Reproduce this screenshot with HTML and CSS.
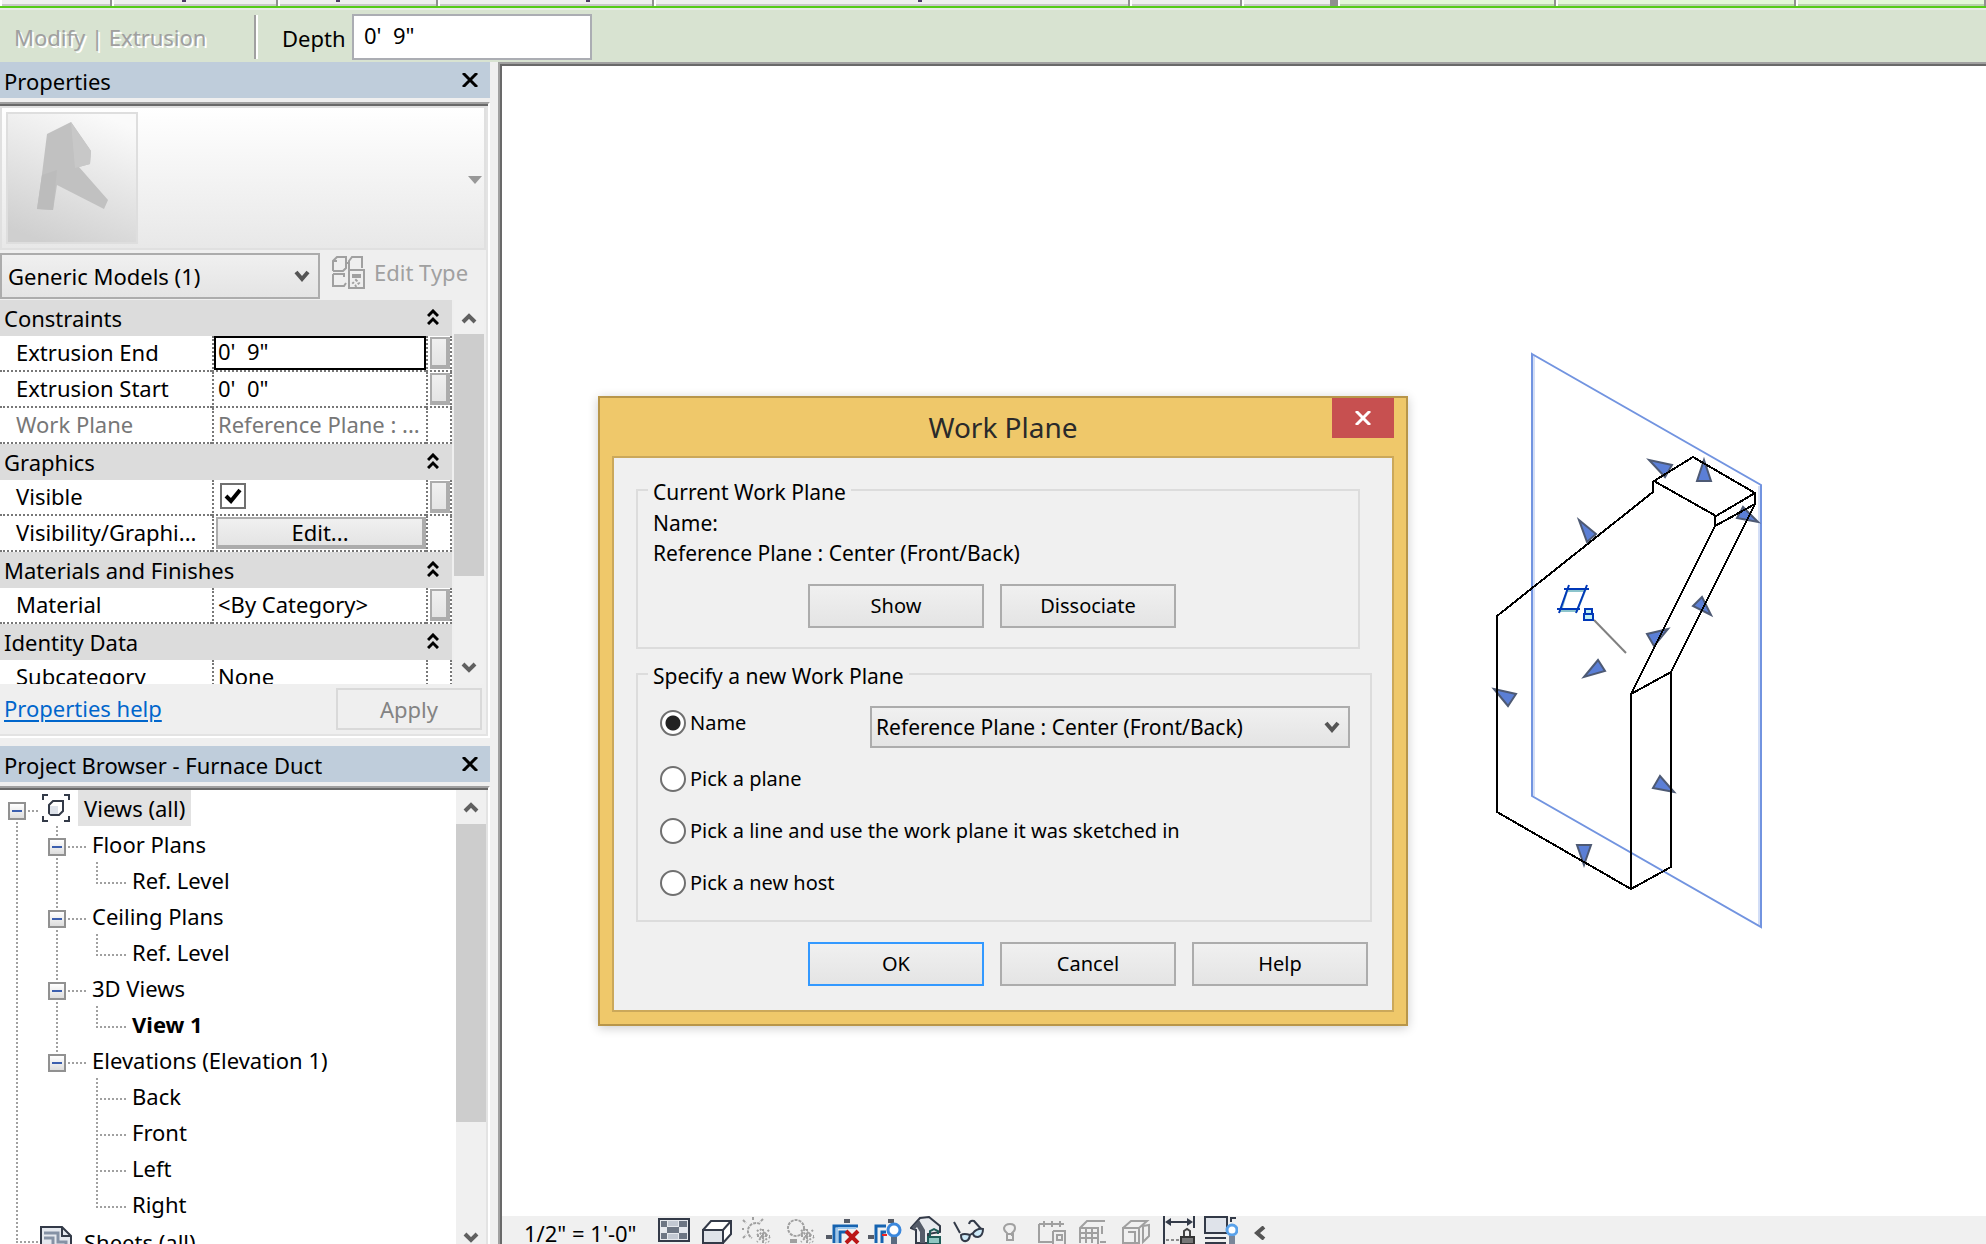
FILE: index.html
```html
<!DOCTYPE html>
<html lang="en">
<head>
<meta charset="utf-8">
<title>Furnace Duct - Modify Extrusion</title>
<link rel="stylesheet" href="styles.css">
</head>
<body>
<div class="app">
  <div class="ribbon" aria-hidden="true">
    <i class="tab w110"></i><i class="tab w168"><b></b></i><i class="tab w160"><b></b></i><i class="tab w216"><b></b></i><i class="tab w476"><b></b></i><i class="tab w112"></i><i class="tab w88"></i>
    <i class="tab context first"></i><i class="tab context w240"></i><i class="tab context grow"></i>
  </div>
  <form class="options">
    <span class="mode">Modify | Extrusion</span>
    <label class="depth" for="depth">Depth</label>
    <input class="depth-input" id="depth" type="text" value="0'  9&quot;">
  </form>
  <div class="workspace">
    <aside class="side">
      <section class="panel">
        <header class="title"><h2>Properties</h2><button class="close" type="button" aria-label="Close Properties"><svg width="16" height="14" viewBox="0 0 16 14"><path d="M1 0L15 14M15 0L1 14" stroke="#000" stroke-width="3"/></svg></button></header>
        <div class="frame">
          <button class="type" type="button" aria-label="Type selector">
            <svg class="thumb" width="132" height="132" viewBox="0 0 132 132">
              <defs><linearGradient id="tg" x1="0.7" y1="0" x2="0.3" y2="1"><stop offset="0" stop-color="#fafafa"/><stop offset="1" stop-color="#cfcfcf"/></linearGradient></defs>
              <rect x="1" y="1" width="130" height="130" fill="url(#tg)" stroke="#dedede" stroke-width="2"/>
              <path d="M41 22L65 10L85 39L84 52L73 55L102 88L98 97L51 73L47 98L31 97L36 62Z" fill="#c1c1c1"/>
              <path d="M65 10L85 39L84 52L69 56Z" fill="#c8c8c8"/><path d="M36 63L51 58L47 98L31 97Z" fill="#bcbcbc"/>
            </svg>
            <svg class="drop" width="14" height="8" viewBox="0 0 14 8"><path d="M0 0H14L7 8Z" fill="#989898"/></svg>
          </button>
          <div class="filter">
            <select class="combo" aria-label="Selection filter"><option>Generic Models (1)</option></select>
            <button class="edit-type" type="button" disabled>
              <svg width="34" height="34" viewBox="0 0 34 34" fill="none" stroke="#a0a0a0" stroke-width="2"><path d="M1 15V5L5 1H14V12L11 15H1M17 13V5L20 1H30V12M1 18H12V21M1 18V30H12L14 27M17 14H32V32H17ZM14 7H18M5 5H2"/><path d="M20 18H29V22H20Z" fill="#a0a0a0" stroke="none"/><path d="M24 24L27 27L24 30L21 27Z" stroke-dasharray="2"/></svg>
              Edit Type</button>
          </div>
          <div class="props">
            <table>
              <colgroup><col class="c1"><col><col class="c3"></colgroup>
              <tbody>
                <tr class="group"><th colspan="3">Constraints<svg class="fold" width="12" height="16" viewBox="0 0 12 16"><path d="M1 7L6 2L11 7M1 15L6 10L11 15"/></svg></th></tr>
                <tr><th><label for="ext-end">Extrusion End</label></th><td class="active"><input id="ext-end" type="text" value="0'  9&quot;"></td><td><button class="mini" type="button" aria-label="Associate Extrusion End"></button></td></tr>
                <tr><th>Extrusion Start</th><td>0'&nbsp; 0"</td><td><button class="mini" type="button" aria-label="Associate Extrusion Start"></button></td></tr>
                <tr class="dim"><th>Work Plane</th><td>Reference Plane : ...</td><td></td></tr>
                <tr class="group"><th colspan="3">Graphics<svg class="fold" width="12" height="16" viewBox="0 0 12 16"><path d="M1 7L6 2L11 7M1 15L6 10L11 15"/></svg></th></tr>
                <tr><th><label for="vis">Visible</label></th><td><input class="check" id="vis" type="checkbox" checked></td><td><button class="mini" type="button" aria-label="Associate Visible"></button></td></tr>
                <tr><th>Visibility/Graphi...</th><td class="btn-cell"><button class="edit" type="button">Edit...</button></td><td></td></tr>
                <tr class="group"><th colspan="3">Materials and Finishes<svg class="fold" width="12" height="16" viewBox="0 0 12 16"><path d="M1 7L6 2L11 7M1 15L6 10L11 15"/></svg></th></tr>
                <tr><th>Material</th><td>&lt;By Category&gt;</td><td><button class="mini" type="button" aria-label="Associate Material"></button></td></tr>
                <tr class="group"><th colspan="3">Identity Data<svg class="fold" width="12" height="16" viewBox="0 0 12 16"><path d="M1 7L6 2L11 7M1 15L6 10L11 15"/></svg></th></tr>
                <tr><th>Subcategory</th><td>None</td><td></td></tr>
              </tbody>
            </table>
            <div class="scroll" aria-hidden="true">
              <svg width="30" height="34" viewBox="0 0 30 34"><path class="chev" d="M9 22L15 16L21 22"/></svg>
              <i class="thumb-bar upper"></i>
              <svg class="down" width="30" height="34" viewBox="0 0 30 34"><path class="chev" d="M9 14L15 20L21 14"/></svg>
            </div>
          </div>
          <footer class="foot"><a href="#help">Properties help</a><button class="apply" type="button" disabled>Apply</button></footer>
        </div>
      </section>
      <section class="panel browser">
        <header class="title"><h2>Project Browser - Furnace Duct</h2><button class="close" type="button" aria-label="Close Project Browser"><svg width="16" height="14" viewBox="0 0 16 14"><path d="M1 0L15 14M15 0L1 14" stroke="#000" stroke-width="3"/></svg></button></header>
        <div class="frame tree-frame">
          <ul class="tree">
            <li class="l1"><div class="row"><i class="box"></i><i class="dots"></i>
              <svg class="node" width="28" height="28" viewBox="0 0 28 28" fill="none" stroke="#333a48" stroke-width="2"><path d="M1 6V1H6M22 1H27V6M27 22V27H22M6 27H1V22"/><path d="M7 11L11 7H21V17L17 21H9L7 19Z" fill="#fff"/><path d="M8 12H16V20H8Z" fill="#dde2ea" stroke="none"/></svg>
              <span class="picked">Views (all)</span></div>
              <ul>
                <li class="l2"><div class="row"><i class="box"></i><i class="dots"></i><span>Floor Plans</span></div>
                  <ul><li class="l3">Ref. Level</li></ul></li>
                <li class="l2"><div class="row"><i class="box"></i><i class="dots"></i><span>Ceiling Plans</span></div>
                  <ul><li class="l3">Ref. Level</li></ul></li>
                <li class="l2"><div class="row"><i class="box"></i><i class="dots"></i><span>3D Views</span></div>
                  <ul><li class="l3 open-view">View 1</li></ul></li>
                <li class="l2"><div class="row"><i class="box"></i><i class="dots"></i><span>Elevations (Elevation 1)</span></div>
                  <ul><li class="l3">Back</li><li class="l3">Front</li><li class="l3">Left</li><li class="l3">Right</li></ul></li>
              </ul>
            </li>
            <li class="l1 sheets"><div class="row"><i class="dots"></i>
              <svg class="node" width="32" height="32" viewBox="0 0 32 32" fill="none" stroke="#333a48" stroke-width="2"><path d="M1 1H22L31 10V31H1Z" fill="#e4e8ee"/><path d="M22 1V10H31"/><path d="M4 7H18V16H26V30M4 12H13V20H4M18 20V30" stroke="#8592a5" stroke-width="3"/></svg>
              <span>Sheets (all)</span></div></li>
          </ul>
          <div class="scroll" aria-hidden="true">
            <svg width="30" height="34" viewBox="0 0 30 34"><path class="chev" d="M9 21L15 15L21 21"/></svg>
            <i class="thumb-bar lower"></i>
            <svg class="down" width="30" height="20" viewBox="0 0 30 20"><path class="chev" d="M9 10L15 16L21 10"/></svg>
          </div>
        </div>
      </section>
    </aside>
    <main class="canvas">
      <svg class="model" width="280" height="590" viewBox="1490 346 280 590" fill="none">
        <g stroke="#d3def6" stroke-width="2"><path d="M1534 356V796M1759 486V925"/></g>
        <path d="M1532 354L1761 485V927L1532 796Z" stroke="#7294e0" stroke-width="2"/>
        <g fill="#5b7fd6" stroke="#4e5a74" stroke-width="2">
          <path d="M1649 460L1672 465L1665 477Z"/><path d="M1704 460L1711 481H1697Z"/><path d="M1579 520L1596 534L1587 542Z"/><path d="M1758 522L1743 507L1737 518Z"/><path d="M1711 615L1702 597L1693 606Z"/><path d="M1668 629L1647 634L1654 646Z"/><path d="M1584 677L1598 660L1605 671Z"/><path d="M1494 689L1516 694L1508 706Z"/><path d="M1674 792L1660 776L1653 788Z"/><path d="M1584 865L1577 845H1591Z"/>
        </g>
        <path d="M1654 481L1693 457L1755 493L1716 516ZM1653 481V492L1497 616V812L1631 889V694L1715 526V516M1715 526L1755 504V493M1755 504L1671 672V867L1631 889M1631 694L1671 672" stroke="#000" stroke-width="2" shape-rendering="crispEdges"/>
        <path d="M1594 620L1626 653" stroke="#808080" stroke-width="2"/>
        <path d="M1567 591H1585L1577 611H1561Z" stroke="#8cc4cc" stroke-width="2"/>
        <path d="M1564 589H1589M1557 609H1580M1569 585L1559 613M1587 585L1576 613" stroke="#0038b8" stroke-width="2"/>
        <path d="M1584 614H1593V620H1584ZM1585 613V609H1592V613" fill="#bff0f4" stroke="#0038b8" stroke-width="2"/>
      </svg>

      <form class="dialog" role="dialog" aria-labelledby="dlg-title">
        <header class="dlg-head"><h1 id="dlg-title">Work Plane</h1>
          <button class="dlg-close" type="button" aria-label="Close"><svg width="16" height="14" viewBox="0 0 16 14"><path d="M1 0L15 14M15 0L1 14" stroke="#fff" stroke-width="3"/></svg></button></header>
        <div class="dlg-body">
          <fieldset class="current">
            <legend>Current Work Plane</legend>
            <p>Name:</p>
            <p>Reference Plane : Center (Front/Back)</p>
            <div class="pair"><button class="push" type="button">Show</button><button class="push" type="button">Dissociate</button></div>
          </fieldset>
          <fieldset class="specify">
            <legend>Specify a new Work Plane</legend>
            <div class="by-name"><label class="pick"><input type="radio" name="plane" checked>Name</label>
              <select class="combo plane" aria-label="Work plane name"><option>Reference Plane : Center (Front/Back)</option></select></div>
            <label class="pick"><input type="radio" name="plane">Pick a plane</label>
            <label class="pick"><input type="radio" name="plane">Pick a line and use the work plane it was sketched in</label>
            <label class="pick"><input type="radio" name="plane">Pick a new host</label>
          </fieldset>
          <div class="actions"><button class="push default" type="button">OK</button><button class="push" type="button">Cancel</button><button class="push" type="button">Help</button></div>
        </div>
      </form>

      <nav class="viewbar" aria-label="View controls">
        <span class="scale">1/2" = 1'-0"</span>
        <div class="tools">
        <button type="button" aria-label="Detail Level"><svg viewBox="0 0 34 28"><path d="M1 3H31V25H1Z" fill="#e6e9ee" stroke="#333a48" stroke-width="2"/><path d="M3 5H9V11H3ZM21 5H29V11H21ZM9 11H21V17H9ZM3 17H9V23H3ZM21 17H29V23H21Z" fill="#6d7684"/><path d="M10 5H20V10H10ZM10 18H20V23H10Z" fill="#c2c8d2"/></svg></button>
        <button type="button" aria-label="Visual Style"><svg viewBox="0 0 34 28" stroke="#333a48" stroke-width="2"><path d="M3 14L11 5H31V18L23 27H3Z" fill="#fff"/><path d="M3 14H23V27H3Z" fill="#dfe3e9"/><path d="M23 14L31 5" /></svg></button>
        <button type="button" aria-label="Sun Path"><svg viewBox="0 0 34 28" stroke="#a0a0a0" stroke-width="2" fill="none"><path d="M18 8A8 8 0 1 0 10 22M11 1V4M1 4L4 7M0 13H2M1 22L4 19M21 3L18 6" stroke-dasharray="3 1"/><path d="M15 14L27 26M27 14L15 26M21 13V27M15 20H28M18 13L28 22M15 18L24 27" stroke-dasharray="2 2"/></svg></button>
        <button type="button" aria-label="Shadows"><svg viewBox="0 0 34 28" stroke="#a0a0a0" stroke-width="2" fill="none"><circle cx="12" cy="12" r="8" stroke-dasharray="3 1"/><path d="M6 25H13" stroke-width="4"/><path d="M17 14L29 26M29 14L17 26M23 13V27M17 20H30M20 13L30 22M17 18L26 27" stroke-dasharray="2 2"/></svg></button>
        <button type="button" aria-label="Crop View"><svg viewBox="0 0 34 28" fill="none"><path d="M0 21H6M18 5H24" stroke="#555b66" stroke-width="4"/><path d="M8 27V10H32M14 27V16H22" stroke="#1563b0" stroke-width="3"/><path d="M12 12H30M11 12V27" stroke="#9cc8ee" stroke-width="2"/><path d="M20 15L32 27M32 15L20 27" stroke="#bb1818" stroke-width="4"/></svg></button>
        <button type="button" aria-label="Show Crop Region"><svg viewBox="0 0 34 28" fill="none"><path d="M0 21H6M20 5H26" stroke="#555b66" stroke-width="4"/><path d="M8 27V10H18M14 27V16H18" stroke="#1563b0" stroke-width="3"/><path d="M14 19H19" stroke="#e22" stroke-width="2"/><circle cx="26" cy="14" r="6" fill="#fff" stroke="#3b88dd" stroke-width="3"/><path d="M26 21V28" stroke="#5a6b80" stroke-width="6"/></svg></button>
        <button type="button" aria-label="Lock 3D View"><svg viewBox="0 0 34 28"><path d="M1 12L10 2L19 1L30 10V16L18 18V27H6V14Z" fill="#e8eaee" stroke="#333a48" stroke-width="2"/><path d="M2 11L9 4L15 14V27H10V16L7 11L4 14Z" fill="#555c69"/><path d="M20 21V15L24 13L28 15V18" fill="none" stroke="#1f5c58" stroke-width="2"/><path d="M18 21H30V28H18Z" fill="#8fc7c2" stroke="#1f5c58" stroke-width="2"/></svg></button>
        <button type="button" aria-label="Temporary Hide"><svg viewBox="0 0 34 28" fill="#cde9f7" stroke="#333a48" stroke-width="2"><path d="M2 6L8 17M17 8Q18 4 22 5L30 14" fill="none"/><path d="M9 19Q12 17 18 19Q17 26 12 25Q9 24 9 19ZM21 17Q25 12 31 13Q31 20 26 21Q21 21 21 17ZM18 19L21 17"/></svg></button>
        <button type="button" aria-label="Reveal Hidden"><svg viewBox="0 0 34 28" fill="none" stroke="#a0a0a0" stroke-width="2"><path d="M13 20V17Q10 15 10 12Q11 8 16 8Q21 8 21 12Q21 15 18 17V20M13 18H19V24H13Z"/></svg></button>
        <button type="button" aria-label="Worksharing Display"><svg viewBox="0 0 34 28" fill="none" stroke="#a0a0a0" stroke-width="2"><path d="M3 8H28M3 8V26H16M8 5V11M16 5V11M24 5V11M17 15H29V28M17 15V28M21 19H26V24H21Z"/></svg></button>
        <button type="button" aria-label="Temporary View Properties"><svg viewBox="0 0 34 28" fill="none" stroke="#a0a0a0" stroke-width="2"><path d="M2 27V12L9 5H27M2 12H20V28M8 12V27M14 12V27M2 17H20M2 22H20M24 10V18M22 26H28"/></svg></button>
        <button type="button" aria-label="Analytical Model"><svg viewBox="0 0 34 28" fill="none" stroke="#a0a0a0" stroke-width="2"><path d="M3 12H19V27H3ZM3 12L11 5H27L19 12M8 16H15V27M23 10L29 9V20L23 26Z"/></svg></button>
        <button type="button" aria-label="Highlight Displacement"><svg viewBox="0 0 34 28" fill="none" stroke="#333a48" stroke-width="2"><path d="M2 0V28M32 0V12M5 6H29"/><path d="M3 6L9 2V10ZM31 6L25 2V10Z" fill="#333a48" stroke="none"/><path d="M4 24H18" stroke="#8a8a8a" stroke-dasharray="3 2"/><path d="M22 21V15L25 13L28 15V21" stroke="#444"/><path d="M19 21H32V28H19Z" fill="#777" stroke="#333"/></svg></button>
        <button type="button" aria-label="Constraints"><svg viewBox="0 0 34 28" fill="none" stroke="#333a48" stroke-width="2"><path d="M1 1H23V17H1Z" fill="#dfe3ea"/><path d="M1 22H22M1 27H22M27 1V6M27 2H32"/><circle cx="28" cy="14" r="5" fill="#fff" stroke="#5aa2ea" stroke-width="3"/><path d="M28 20V28" stroke="#7a8699" stroke-width="6"/></svg></button>
        </div>
        <button class="back" type="button" aria-label="Scroll left"><svg width="12" height="14" viewBox="0 0 12 14"><path d="M10 1L3 7L10 13" fill="none" stroke="#555" stroke-width="4"/></svg></button>
      </nav>
    </main>
  </div>
</div>
</body>
</html>
```
FILE: styles.css
```css
* { box-sizing: border-box; }
body { margin: 0; background: #efefef; color: #000; font: 22px/36px "Noto Sans", "Open Sans", sans-serif; }
button, input, select { font: inherit; color: inherit; margin: 0; border-radius: 0; }
button { padding: 0; border: 0; background: none; }
h1, h2, p, ul { margin: 0; padding: 0; font-weight: normal; font-size: inherit; list-style: none; }
svg { display: block; flex: none; }
.app { display: flex; flex-direction: column; height: 100vh; overflow: hidden; }

/* Ribbon edge */
.ribbon { display: flex; flex: none; height: 10px; background: linear-gradient(#55cc18 0 2px, #e8ebe6 2px) 0 6px no-repeat; }
.tab { height: 6px; border-right: 2px solid #909090; background: #efefef; border-left: 2px solid #fff; box-shadow: inset 0 -2px #c9c9c9; }
.tab b { display: block; width: 4px; height: 2px; background: #4a3a66; }
.w110 { width: 112px; }
.w168 { width: 166px; padding-left: 68px; }
.w160 { width: 160px; padding-left: 56px; }
.w216 { width: 216px; padding-left: 146px; }
.w476 { width: 476px; padding-left: 262px; }
.w112 { width: 112px; }
.w88 { width: 96px; border-right-width: 8px; }
.context { background: #e3f7d8; box-shadow: inset 0 -2px #b9d3ad; }
.first { width: 218px; }
.w240 { width: 240px; }
.grow { flex: 1; }

/* Options bar */
.options { display: flex; flex: none; align-items: center; height: 52px; padding: 2px 0 0 14px; background: #d8e3d1; }
.mode { width: 242px; height: 44px; line-height: 44px; border-right: 2px solid #a0a0a0; box-shadow: 2px 0 #fff; color: #a0a0a0; text-shadow: 2px 2px #fff; }
.depth { width: 96px; padding: 2px 0 0 26px; }
.depth-input { width: 240px; height: 46px; padding: 0 10px 4px; border: 2px solid #abadb3; background: #fff; }

.workspace { display: flex; flex: 1; min-height: 0; }
.side { display: flex; flex-direction: column; flex: none; width: 490px; margin-right: 8px; gap: 8px; }
.panel { flex: none; }
.title { display: flex; align-items: center; justify-content: space-between; height: 36px; padding: 0 12px 0 4px; margin-bottom: 4px; background: #bfcddb; }
.title h2 { padding-top: 2px; }
.frame { padding-right: 2px; border: solid; border-width: 2px 2px 2px 0; border-color: #a0a0a0 #fff #fff; box-shadow: inset 0 2px #696969, inset -2px -2px #e3e3e3; }

/* Properties palette */
.type { display: flex; align-items: center; justify-content: space-between; width: 100%; height: 144px; margin-top: 2px; padding: 0 2px 0 4px; border: 2px solid #e0e0e0; background: linear-gradient(#fff, #e8e8e8); }
.drop { margin-top: 4px; }
.filter { display: flex; align-items: center; height: 48px; gap: 12px; margin-top: 2px; }
.combo { appearance: none; width: 320px; height: 46px; padding: 0 6px; border: 2px solid #acacac; background: url("data:image/svg+xml,%3Csvg xmlns='http://www.w3.org/2000/svg' width='16' height='14'%3E%3Cpath d='M2 3L8 10L14 3' fill='none' stroke='%23555' stroke-width='4'/%3E%3C/svg%3E") right 8px center no-repeat, linear-gradient(#f0f0f0, #e4e4e4); }
.edit-type { display: flex; gap: 8px; padding-bottom: 6px; line-height: 32px; color: #a0a0a0; }
.props { display: flex; height: 384px; overflow: hidden; }
table { table-layout: fixed; width: 452px; height: 396px; border-spacing: 0; flex: none; }
.c1 { width: 212px; }
.c3 { width: 26px; }
th, td { height: 36px; padding: 0 0 2px 4px; line-height: 32px; text-align: left; font-weight: normal; white-space: nowrap; background: #fff; border-bottom: 2px dotted #777; }
th { padding-left: 16px; }
td { border-left: 2px dotted #777; }
td:last-child { padding: 0 0 0 2px; border-right: 2px dotted #777; }
.group th { position: relative; padding: 0 0 0 4px; line-height: 36px; background: #dcdcdc; border: 0; }
.fold { position: absolute; right: 13px; top: 9px; }
.fold path { fill: none; stroke: #000; stroke-width: 3; }
.dim { color: #777; }
.active, .btn-cell { padding: 0; }
.active input { display: block; width: 100%; height: 34px; padding: 0 2px 4px; border: 2px solid #000; background: #fff; outline: 0; }
.mini, .edit { display: block; width: 20px; height: 32px; border: solid #acacac; border-width: 2px 4px 4px 2px; background: linear-gradient(#f0f0f0, #e4e4e4); }
.edit { width: 210px; margin-left: 2px; line-height: 26px; }
.check { display: grid; appearance: none; width: 26px; height: 26px; margin: 0 0 0 2px; border: 2px solid #707070; background: #fff url("data:image/svg+xml,%3Csvg xmlns='http://www.w3.org/2000/svg' width='18' height='18'%3E%3Cpath d='M2 9L7 14L16 3' fill='none' stroke='%23000' stroke-width='4'/%3E%3C/svg%3E") center no-repeat; }
.scroll { display: flex; flex-direction: column; flex: none; width: 30px; margin-left: 2px; background: #f0f0f0; }
.chev { fill: none; stroke: #606060; stroke-width: 4; }
.thumb-bar { background: #cdcdcd; flex: none; }
.upper { height: 242px; }
.down { margin-top: auto; }
.foot { display: flex; align-items: flex-start; justify-content: space-between; height: 52px; padding: 4px 4px 0 4px; }
.foot a { color: #0066cc; line-height: 40px; text-underline-offset: 3px; text-decoration-thickness: 2px; }
.apply { width: 146px; height: 42px; border: 2px solid #d9d9d9; color: #838383; }

/* Project browser */
.browser { display: flex; flex: 1; flex-direction: column; min-height: 0; }
.browser .title { flex: none; }
.tree-frame { display: flex; flex: 1; min-height: 0; padding: 2px 2px 0 0; border-bottom: 0; background: #fff; box-shadow: inset 0 2px #696969, inset -2px 0 #e3e3e3; overflow: hidden; }
.tree { flex: 1; }
.tree-frame .scroll { margin: 0; }
.lower { height: 298px; }
.tree li { white-space: nowrap; }
.row { display: flex; align-items: center; height: 36px; }
.box { flex: none; width: 18px; height: 18px; margin-top: 6px; border: 2px solid #919191; background: linear-gradient(#3c5fae, #3c5fae) center / 10px 2px no-repeat, linear-gradient(#fff, #ddd); }
.dots { flex: none; width: 20px; height: 2px; margin: 6px 4px 0 2px; background: repeating-linear-gradient(90deg, #a0a0a0 0 2px, transparent 2px 4px); }
.l1 { padding-left: 8px; background: repeating-linear-gradient(#a0a0a0 0 2px, transparent 2px 4px) 16px 32px / 2px 100% no-repeat; }
.l1 > .row > .dots { width: 12px; margin-right: 2px; }
.node { margin-right: 8px; }
.picked { padding: 0 6px; background: #e2e2e2; }
.l2 { margin-left: -8px; padding-left: 48px; background: repeating-linear-gradient(#a0a0a0 0 2px, transparent 2px 4px) 56px 0 / 2px 100% no-repeat; }
.l2:last-child { background-size: 2px 14px; }
.l3 { height: 36px; margin-left: 48px; padding-left: 36px; background: repeating-linear-gradient(#a0a0a0 0 2px, transparent 2px 4px) 0 0 / 2px 100% no-repeat, repeating-linear-gradient(90deg, #a0a0a0 0 2px, transparent 2px 4px) 0 20px / 30px 2px no-repeat; }
.l3:last-child { background-size: 2px 22px, 30px 2px; }
.open-view { font-weight: bold; }
.sheets { padding-left: 16px; background-position: 16px 0; background-size: 2px 20px; }
.l1.sheets > .row > .dots { width: 22px; margin: 0 2px 0 0; }
.sheets > .row { height: 40px; }
.sheets .node { margin-right: 12px; }

/* Drawing area */
.canvas { position: relative; display: flex; flex: 1; flex-direction: column; justify-content: flex-end; min-width: 0; border: solid; border-width: 2px 0 0 2px; border-color: #a0a0a0; background: #fff; box-shadow: inset 2px 2px #696969; overflow: hidden; }
.model { position: absolute; left: 990px; top: 282px; }

.dialog { position: absolute; left: 98px; top: 332px; width: 810px; padding: 0 12px 12px; border: 2px solid #b8964a; background: #efc86a; box-shadow: 0 2px 10px #0003; font-size: 21px; }
.dlg-head { display: grid; grid-template-columns: 62px 1fr 62px; align-items: start; height: 58px; }
.dlg-head h1 { grid-column: 2; font-size: 28px; line-height: 58px; text-align: center; color: #2a2a2a; }
.dlg-close { display: grid; place-items: center; width: 62px; height: 40px; background: #c75050; }
.dlg-body { padding: 20px 20px 24px 22px; border: 2px solid #cba85a; background: #f0f0f0; }
fieldset { position: relative; margin: 0; padding: 0 15px; border: 2px solid #dcdcdc; }
legend { padding: 4px 5px 0; margin-left: -5px; line-height: 20px; }
.current { margin-right: 12px; height: 171px; }
.current p { line-height: 30px; }
.current legend + p { padding-top: 6px; }
.pair, .actions { display: flex; gap: 16px; }
.pair { margin: 16px 0 0 155px; }
.push { width: 176px; height: 44px; border: 2px solid #acacac; background: linear-gradient(#f0f0f0, #e4e4e4); font-size: 20px; line-height: 38px; }
.default { border-color: #3399ff; }
.specify { height: 260px; margin-top: 13px; padding: 0 20px 0 22px; }
.specify legend { margin-left: -12px; }
.by-name { display: flex; align-items: center; justify-content: space-between; margin-top: 20px; height: 42px; }
.by-name .pick { margin: 0; padding-bottom: 8px; }
.plane { width: 480px; height: 42px; padding: 0 4px; }
.pick { display: flex; align-items: center; gap: 4px; height: 26px; line-height: 26px; margin-top: 26px; font-size: 20px; }
.by-name + .pick { margin-top: 18px; }
.pick input { appearance: none; width: 26px; height: 26px; border: 2px solid #707070; border-radius: 50%; background: #fff; }
.pick input:checked { background: radial-gradient(#222 0 7px, #fff 8px); }
.actions { justify-content: flex-end; margin-top: 20px; padding-right: 4px; }

.viewbar { display: flex; flex: none; align-items: flex-start; height: 28px; margin-left: 2px; padding-left: 22px; background: #f0f0f0; overflow: hidden; }
.scale { width: 134px; line-height: 34px; }
.tools { display: flex; gap: 8px; }
.tools svg { width: 34px; height: 28px; }
.back { margin: 10px 0 0 16px; }
```
